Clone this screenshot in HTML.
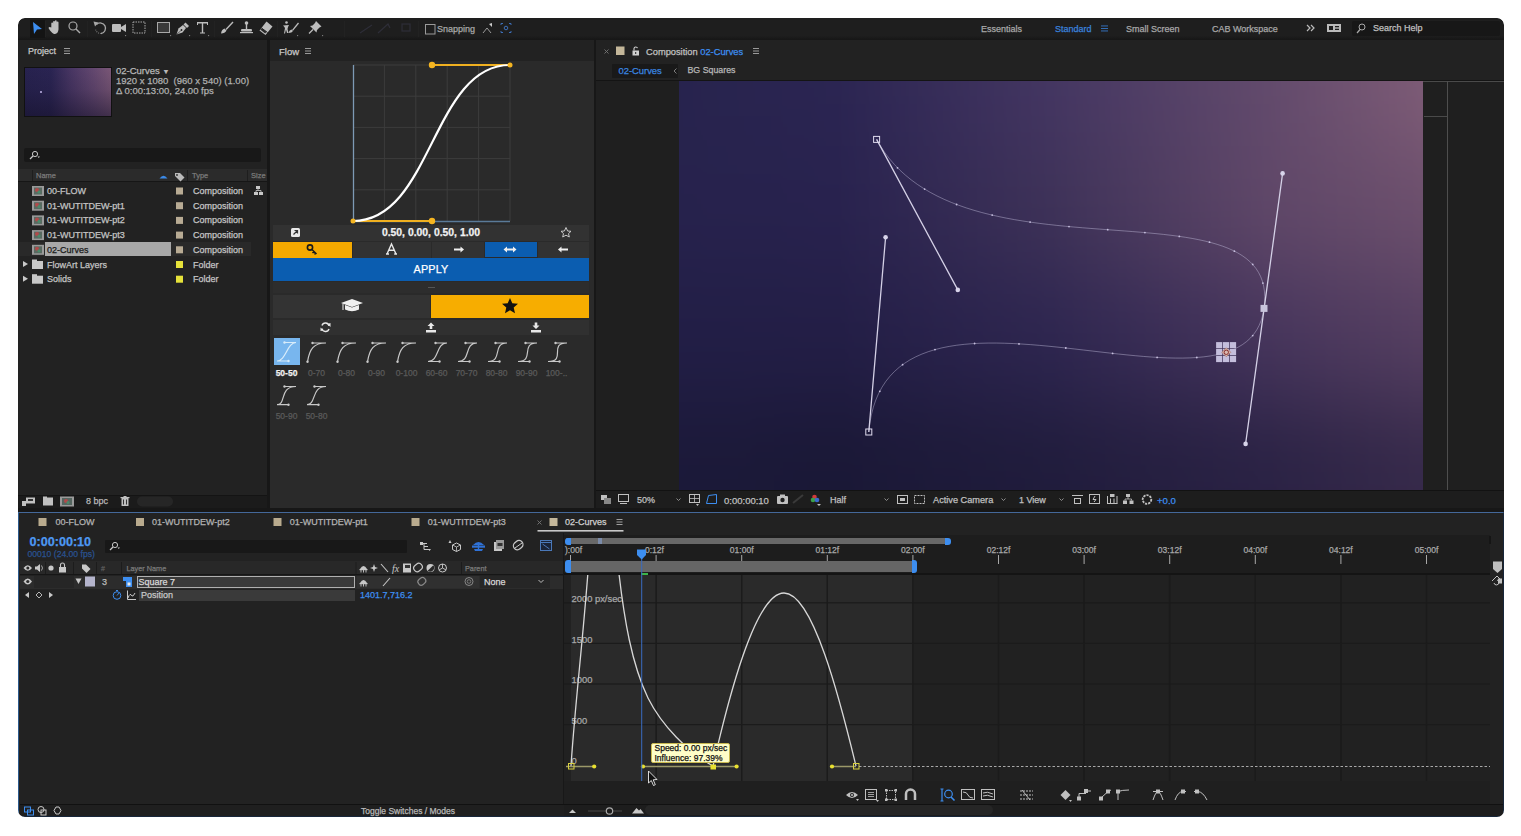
<!DOCTYPE html>
<html><head><meta charset="utf-8">
<style>
*{margin:0;padding:0;box-sizing:border-box}
html,body{width:1521px;height:836px;background:#fff;overflow:hidden;font-family:"Liberation Sans",sans-serif;color:#b0b0b0;font-size:9px}
.a{position:absolute}
.t{position:absolute;white-space:pre;line-height:1;-webkit-text-stroke:0.25px currentColor}
svg{position:absolute;overflow:visible}
</style></head><body>
<!-- WINDOW FRAME -->
<div class="a" style="left:18px;top:18px;width:1486px;height:799px;background:#171717;border-radius:7px"></div>

<!-- TOOLBAR -->
<div class="a" style="left:18px;top:18px;width:1486px;height:22px;background:linear-gradient(180deg,#1e1e1e 0%,#1e1e1e 80%,#161616 100%);border-radius:7px 7px 0 0"></div>
<!-- selection tool active bg -->
<div class="a" style="left:30px;top:20px;width:15px;height:18px;background:#141414"></div>
<svg style="left:0;top:0" width="1521" height="40">
 <g fill="#bdbdbd" stroke="none">
  <!-- arrow -->
  <path d="M33 22 L42 29 L37 29.5 L34 34 Z" fill="#3d8ef0"/>
  <!-- hand -->
  <path d="M51.3 27.5 V23.5 A0.9 0.9 0 0 1 53.1 23.5 V26.5 V21.8 A0.9 0.9 0 0 1 54.9 21.8 V26.5 V21.2 A0.9 0.9 0 0 1 56.7 21.2 V26.5 V22.5 A0.9 0.9 0 0 1 58.5 22.5 V29.5 Q58 33.5 55 34 L54 34 Q52 33 50 30.5 L48.5 28 Q49 26.5 51.3 27.5Z"/>
  <!-- rotate -->
  <path d="M96.5 24.5 A5.3 5.3 0 1 1 101 33.5" fill="none" stroke="#a8a8a8" stroke-width="1.3"/><path d="M101 33.5 A5.3 5.3 0 0 1 95.5 29" fill="none" stroke="#777" stroke-width="1.1" stroke-dasharray="1 1"/>
  <path d="M93.5 21.5 L98.5 22.5 L95 26.5Z" fill="#a8a8a8"/>
  <!-- camera -->
  <rect x="112" y="24" width="9" height="8" rx="1"/>
  <path d="M121 27 L126 24 L126 32 L121 29Z"/>
  <!-- pan behind -->
  <g fill="none" stroke="#a8a8a8" stroke-width="1" stroke-dasharray="1.5 1"><rect x="133" y="22" width="12" height="11"/></g>
  <!-- rect -->
  <rect x="157.5" y="22.5" width="12" height="10" fill="#3a3a3a" stroke="#a8a8a8" stroke-width="1"/>
  <!-- pen -->
  <path d="M176.5 34.5 L178.5 28.5 L183 25 L186 28 L182.5 32.5Z"/><path d="M183.5 24.5 L185.5 22.5 L189 26 L187 28Z"/><circle cx="181.5" cy="30" r="0.9" fill="#1e1e1e"/><path d="M176.8 34.2 L180.8 30.8" stroke="#1e1e1e" stroke-width="0.6"/>
  <!-- T -->
  <path d="M197 22 L208 22 L208 25 L207 25 L207 23.5 L203.2 23.5 L203.2 32.5 L205 32.5 L205 33.5 L200 33.5 L200 32.5 L201.8 32.5 L201.8 23.5 L198 23.5 L198 25 L197 25Z"/>
  <!-- brush -->
  <path d="M221 33.5 Q221.5 29.5 224.5 28.5 L226.5 30.5 Q225 33.5 221 33.5Z"/><path d="M225.5 29 L232.5 21.5 L233.5 22.5 L226.5 30Z"/>
  <!-- stamp -->
  <circle cx="246.5" cy="23" r="1.8"/><rect x="245.8" y="24" width="1.4" height="5"/><rect x="241" y="29" width="11" height="2.5" rx="1"/><rect x="240" y="32" width="13" height="1.2"/>
  <!-- eraser -->
  <path d="M259.5 30.5 L266.5 21.5 L272.5 26.5 L265.5 35Z"/><path d="M261.5 28 L267.5 32.5" stroke="#1e1e1e" stroke-width="1"/><path d="M260.2 29.6 L262 28.3 L266.5 31.8 L265.2 33.5Z" fill="#2a2a2a"/>
  <!-- roto -->
  <circle cx="286.5" cy="22.5" r="1.3"/><path d="M283 25.5 L289 25 L288 27 L287.5 29 L288.5 33 L287 33 L286 29.5 L285 33.5 L284 33.5 L285 28 L284 26.5Z"/><path d="M288.5 33 Q289 30 291.5 29.5 L293 31 Q292 33 288.5 33Z"/><path d="M292 30 L298 22.5 L299 23.5 L293 30.8Z"/>
  <!-- pin -->
  <path d="M316 21 L321.5 26.5 L319.5 27.5 L317 30 L316.5 32.5 L310 26 L312.5 25.5 L315 23Z"/><path d="M313 29.5 L309 33.5" stroke="#bdbdbd" stroke-width="1.3"/>
 </g>
 <!-- zoom -->
 <circle cx="73" cy="26" r="4" fill="none" stroke="#aaa" stroke-width="1.2"/><path d="M76 29 L80 33" stroke="#aaa" stroke-width="1.5"/>
 <!-- tiny corner triangles -->
 <g fill="#888"><path d="M125 35 l1.5 0 l-1.5 1.5z"/><path d="M170 35 l1.5 0 l-1.5 1.5z"/><path d="M189 35 l1.5 0 l-1.5 1.5z"/><path d="M208 35 l1.5 0 l-1.5 1.5z"/><path d="M297 35 l1.5 0 l-1.5 1.5z"/><path d="M322 35 l1.5 0 l-1.5 1.5z"/></g>
 <!-- separators -->
 <g fill="#222222"><rect x="45" y="21" width="1" height="16"/><rect x="87" y="21" width="1" height="16"/><rect x="151" y="21" width="1" height="16"/><rect x="214" y="21" width="1" height="16"/><rect x="277" y="21" width="1" height="16"/><rect x="344" y="21" width="1" height="16"/><rect x="418" y="21" width="1" height="16"/></g>
 <!-- faded icons -->
 <g stroke="#2e2e38" stroke-width="1.2" fill="none"><path d="M360 33 L372 25"/><path d="M378 33 L388 24 L390 28"/><rect x="402" y="24" width="8" height="7"/></g>
 <!-- snapping checkbox -->
 <rect x="425.5" y="24.5" width="9.5" height="9.5" fill="none" stroke="#9a9a9a" stroke-width="1"/>
 <path d="M483 33 L487 28 L491 33" fill="none" stroke="#9a9a9a" stroke-width="1"/><path d="M489 24 L492 23 L492 27Z" fill="#ccc"/>
 <g stroke="#3d6fb8" stroke-width="1" fill="none"><path d="M501 25 v-1.5 h2 M509 23.5 h2 v1.5 M511 31 v1.5 h-2 M503 32.5 h-2 v-1.5"/><circle cx="506" cy="28" r="1.8"/></g>
</svg>
<div class="t" style="left:437px;top:25px;color:#a8a8a8">Snapping</div>
<!-- right workspace -->
<div class="t" style="left:981px;top:24.5px;color:#a8a8a8">Essentials</div>
<div class="t" style="left:1055px;top:24.5px;color:#3a82dc">Standard</div>
<svg style="left:0;top:0" width="1521" height="40"><g fill="#3576c8"><rect x="1101" y="25.5" width="7" height="0.9"/><rect x="1101" y="28" width="7" height="0.9"/><rect x="1101" y="30.5" width="7" height="0.9"/></g>
<path d="M1307 25 L1310 28 L1307 31 M1311 25 L1314 28 L1311 31" fill="none" stroke="#bbb" stroke-width="1.2"/>
<rect x="1327" y="24" width="14" height="8" fill="#bbb"/><rect x="1329" y="26" width="4" height="4" fill="#1e1e1e"/><rect x="1335" y="26" width="4" height="1.3" fill="#1e1e1e"/><rect x="1335" y="28.7" width="4" height="1.3" fill="#1e1e1e"/>
<rect x="1352" y="21" width="148" height="15" rx="2" fill="#171717"/>
<circle cx="1362" cy="27" r="3" fill="none" stroke="#aaa" stroke-width="1"/><path d="M1360 29.5 L1357 33" stroke="#aaa" stroke-width="1.2"/>
</svg>
<div class="t" style="left:1126px;top:24.5px;color:#a8a8a8">Small Screen</div>
<div class="t" style="left:1212px;top:24.5px;color:#a8a8a8">CAB Workspace</div>
<div class="t" style="left:1373px;top:24px;color:#c0c0c0">Search Help</div>


<!-- PROJECT PANEL -->
<div class="a" style="left:18px;top:40px;width:249px;height:468px;background:#222222"></div>
<div class="t" style="left:28px;top:47px;color:#c8c8c8;font-size:9px">Project</div>
<svg style="left:0;top:0" width="300" height="520"><g fill="#9a9a9a"><rect x="64" y="48" width="6" height="1"/><rect x="64" y="50.5" width="6" height="1"/><rect x="64" y="53" width="6" height="1"/></g></svg>
<!-- thumbnail -->
<div class="a" style="left:23.5px;top:67px;width:88px;height:50px;border:1px solid #111;overflow:hidden;background:linear-gradient(90deg,#27224f 0%,#2a2452 30%,#4a3764 55%,#644870 80%,#7a5776 100%)"><div class="a" style="left:0;top:0;width:100%;height:100%;background:linear-gradient(180deg,rgba(20,16,40,0) 0%,rgba(20,16,40,0.15) 45%,rgba(20,16,40,0.55) 100%)"></div></div>
<div class="a" style="left:40px;top:91px;width:1.5px;height:1.5px;background:#9a8fc0"></div>
<div class="t" style="left:116px;top:66px;color:#b8b8b8;font-size:9.5px">02-Curves <span style="font-size:7px">▼</span></div>
<div class="t" style="left:116px;top:76px;color:#b0b0b0;font-size:9.5px">1920 x 1080  (960 x 540) (1.00)</div>
<div class="t" style="left:116px;top:86px;color:#b0b0b0;font-size:9.5px">Δ 0:00:13:00, 24.00 fps</div>
<!-- search -->
<div class="a" style="left:24px;top:148px;width:237px;height:14px;background:#181818;border-radius:2px"></div>
<svg style="left:0;top:0" width="300" height="520"><circle cx="35" cy="154" r="2.6" fill="none" stroke="#c8c8c8" stroke-width="1"/><path d="M33 156 L30 159" stroke="#c8c8c8" stroke-width="1.2"/><path d="M37.5 156.5 L40 156.5 L38.75 158Z" fill="#c8c8c8"/></svg>
<!-- header -->
<div class="a" style="left:18px;top:169px;width:249px;height:13px;background:#2b2b2b;border-bottom:1px solid #161616"></div>
<div class="a" style="left:32px;top:170px;width:1px;height:11px;background:#1e1e1e"></div>
<div class="t" style="left:36px;top:172px;color:#7a7a7a;font-size:7.5px">Name</div>
<svg style="left:0;top:0" width="300" height="520"><path d="M159.5 178.5 Q163.5 173 167.5 178.5Z" fill="#3b8ae8"/>
<path d="M175 173 L180 173 L184.5 177.5 L180.5 181.5 L175 176Z" fill="#bbb"/><circle cx="177" cy="175" r="0.9" fill="#2b2b2b"/>
<rect x="187" y="170" width="1" height="11" fill="#1e1e1e"/><rect x="247" y="170" width="1" height="11" fill="#1e1e1e"/>
</svg>
<div class="t" style="left:192px;top:172px;color:#7a7a7a;font-size:7.5px">Type</div>
<div class="t" style="left:251px;top:172px;color:#7a7a7a;font-size:7.5px">Size</div>
<!-- rows -->
<div class="a" style="left:45px;top:242px;width:126px;height:14px;background:#a8a8a8"></div>
<div class="a" style="left:18px;top:242px;width:27px;height:14px;background:#292929"></div>
<div class="a" style="left:171px;top:242px;width:80px;height:14px;background:#292929"></div>
<svg style="left:0;top:0" width="300" height="520">
 <g id="compicon">
  <rect x="32" y="186" width="12" height="10" fill="#9a9a9a"/><rect x="34" y="187.5" width="8" height="7" fill="#5a6a62"/><circle cx="37" cy="190" r="2" fill="#b04a4a"/><circle cx="39" cy="192" r="1.6" fill="#4a8a6a"/>
 </g>
 <use href="#compicon" y="14.7"/><use href="#compicon" y="29.4"/><use href="#compicon" y="44.1"/><use href="#compicon" y="58.8"/>
 <g fill="#b8ab94"><rect x="176" y="187.5" width="7" height="7"/><rect x="176" y="202.2" width="7" height="7"/><rect x="176" y="216.9" width="7" height="7"/><rect x="176" y="231.6" width="7" height="7"/><rect x="176" y="246.3" width="7" height="7"/></g>
 <g fill="#e6e23a"><rect x="176" y="261" width="7" height="7"/><rect x="176" y="275.7" width="7" height="7"/></g>
 <g fill="#c8c8c8"><rect x="32" y="261" width="11" height="8"/><rect x="32" y="259.5" width="5" height="2"/><rect x="32" y="275.7" width="11" height="8"/><rect x="32" y="274.2" width="5" height="2"/>
 <path d="M23 261 L28 264 L23 267Z"/><path d="M23 275.7 L28 278.7 L23 281.7Z"/></g>
 <!-- flowchart icon -->
 <g fill="#c8c8c8"><rect x="256" y="186" width="4" height="3"/><rect x="254" y="192" width="4" height="3"/><rect x="259" y="192" width="4" height="3"/><path d="M258 189 L258 190.5 L256 190.5 L256 192 M258 190.5 L261 190.5 L261 192" stroke="#c8c8c8" stroke-width="0.8" fill="none"/></g>
</svg>
<div class="t" style="left:47px;top:187px;color:#c4c4c4">00-FLOW</div>
<div class="t" style="left:47px;top:201.7px;color:#c4c4c4">01-WUTITDEW-pt1</div>
<div class="t" style="left:47px;top:216.4px;color:#c4c4c4">01-WUTITDEW-pt2</div>
<div class="t" style="left:47px;top:231.1px;color:#c4c4c4">01-WUTITDEW-pt3</div>
<div class="t" style="left:47px;top:245.8px;color:#1a1a1a">02-Curves</div>
<div class="t" style="left:47px;top:260.5px;color:#c4c4c4">FlowArt Layers</div>
<div class="t" style="left:47px;top:275.2px;color:#c4c4c4">Solids</div>
<div class="t" style="left:193px;top:187px;color:#c4c4c4">Composition</div>
<div class="t" style="left:193px;top:201.7px;color:#c4c4c4">Composition</div>
<div class="t" style="left:193px;top:216.4px;color:#c4c4c4">Composition</div>
<div class="t" style="left:193px;top:231.1px;color:#c4c4c4">Composition</div>
<div class="t" style="left:193px;top:245.8px;color:#c4c4c4">Composition</div>
<div class="t" style="left:193px;top:260.5px;color:#c4c4c4">Folder</div>
<div class="t" style="left:193px;top:275.2px;color:#c4c4c4">Folder</div>
<!-- bottom bar -->
<div class="a" style="left:18px;top:495px;width:249px;height:13px;background:#1b1b1b;border-top:1px solid #141414"></div>
<svg style="left:0;top:0" width="300" height="520">
 <g fill="#c0c0c0"><rect x="26" y="497.5" width="9" height="6"/><rect x="22" y="501" width="4" height="5"/><rect x="28" y="499" width="5" height="2" fill="#333"/>
 <rect x="43" y="497.5" width="10" height="8"/><rect x="43" y="496.5" width="4" height="1.5"/>
 <rect x="60" y="496.5" width="14" height="10" fill="#9a9a9a"/><rect x="62" y="498" width="10" height="7" fill="#556660"/><circle cx="66" cy="501" r="2" fill="#b04a4a"/><circle cx="68" cy="502.5" r="1.5" fill="#4a8a6a"/>
 <rect x="121.5" y="498" width="7" height="8" rx="0.5"/><rect x="120.5" y="497" width="9" height="1.2"/><rect x="123.5" y="496" width="3" height="1.2"/><rect x="123" y="499.5" width="1" height="5" fill="#333"/><rect x="126" y="499.5" width="1" height="5" fill="#333"/></g>
 <rect x="137" y="496.5" width="36" height="10" rx="5" fill="#262626"/>
</svg>
<div class="t" style="left:86px;top:497px;color:#b8b8b8">8 bpc</div>


<!-- FLOW PANEL -->
<div class="a" style="left:270px;top:40px;width:324px;height:468px;background:#222222"></div>
<div class="a" style="left:270px;top:61px;width:324px;height:447px;background:#2a2a2a"></div>
<!--FLOW-->
<div class="t" style="left:279px;top:47px;color:#c8c8c8;font-size:9.5px">Flow</div>
<svg style="left:0;top:0" width="600" height="520">
<g fill="#9a9a9a"><rect x="305" y="48" width="6" height="1"/><rect x="305" y="50.5" width="6" height="1"/><rect x="305" y="53" width="6" height="1"/></g>
<g stroke="#3c3c3c" stroke-width="1" fill="none"><path d="M384.4 65 V221" /><path d="M353 96.2 H510" /><path d="M415.8 65 V221" /><path d="M353 127.4 H510" /><path d="M447.2 65 V221" /><path d="M353 158.6 H510" /><path d="M478.6 65 V221" /><path d="M353 189.8 H510" /><path d="M510 65 V221" /><path d="M353 65 H510" /></g>
<path d="M353.5 65 V221" stroke="#7d9ab5" stroke-width="1.3"/>
<path d="M353 221.5 H510" stroke="#5a7a98" stroke-width="1.3"/>
<path d="M353 221 H432" stroke="#f0b020" stroke-width="2"/>
<path d="M432 65 H510" stroke="#f0b020" stroke-width="2"/>
<path d="M353 221 C432 221 432 65 510 65" stroke="#ffffff" stroke-width="2.2" fill="none"/>
<circle cx="432" cy="65" r="3.2" fill="#f5b521"/><circle cx="510" cy="65" r="2.5" fill="#f5b521"/>
<circle cx="432" cy="221" r="3.2" fill="#f5b521"/><circle cx="353" cy="221" r="2.5" fill="#f5b521"/>
</svg>
<div class="a" style="left:273px;top:225px;width:316px;height:16px;background:#323232"></div>
<div class="t" style="left:273px;top:228px;width:316px;text-align:center;color:#f0f0f0;font-weight:bold;font-size:10.4px">0.50, 0.00, 0.50, 1.00</div>
<svg style="left:0;top:0" width="600" height="520"><rect x="291" y="228" width="9" height="9" rx="1.5" fill="#e8e8e8"/><path d="M293.5 234.5 L297.5 230.5 M294.5 230.5 H297.5 V233.5" stroke="#323232" stroke-width="1.2" fill="none"/>
<path d="M566 227.5 L567.6 231 L571 231.3 L568.5 233.6 L569.3 237 L566 235.2 L562.7 237 L563.5 233.6 L561 231.3 L564.4 231Z" fill="none" stroke="#d8d8d8" stroke-width="0.9"/></svg>
<div class="a" style="left:273px;top:242px;width:79px;height:16px;background:#f5a900"></div>
<div class="a" style="left:353px;top:242px;width:78px;height:16px;background:#323232"></div>
<div class="a" style="left:432px;top:242px;width:52px;height:16px;background:#323232"></div>
<div class="a" style="left:485px;top:242px;width:52px;height:15px;background:#0b5db0"></div>
<div class="a" style="left:538px;top:242px;width:51px;height:16px;background:#323232"></div>
<svg style="left:0;top:0" width="600" height="520">
<circle cx="310" cy="247.5" r="2.6" fill="none" stroke="#1a1a1a" stroke-width="1.6"/><path d="M312 249.5 L316.5 254 M314 251.5 L312.5 253 M315.5 253 L314.3 254.2" stroke="#1a1a1a" stroke-width="1.5"/>
<path d="M387 254 L391.5 244 L396 254 M388.8 250.3 H394.2 M386 254 H389 M394.2 254 H397" stroke="#e8e8e8" stroke-width="1.4" fill="none"/>
<path d="M454 249.5 H462" stroke="#f0f0f0" stroke-width="2"/><path d="M460.5 246.5 L464 249.5 L460.5 252.5Z" fill="#f0f0f0"/>
<path d="M505 249.5 H515" stroke="#f0f0f0" stroke-width="2"/><path d="M507 246.5 L503.5 249.5 L507 252.5Z M513 246.5 L516.5 249.5 L513 252.5Z" fill="#f0f0f0"/>
<path d="M560 249.5 H568" stroke="#f0f0f0" stroke-width="2"/><path d="M561.5 246.5 L558 249.5 L561.5 252.5Z" fill="#f0f0f0"/>
</svg>
<div class="a" style="left:273px;top:258px;width:316px;height:23px;background:#0b5db0"></div>
<div class="t" style="left:273px;top:264px;width:316px;text-align:center;color:#ffffff;font-size:10.8px;letter-spacing:0.2px">APPLY</div>
<div class="a" style="left:273px;top:282px;width:316px;height:11px;background:#2d2d2d"></div>
<div class="a" style="left:428px;top:286.5px;width:7px;height:1px;background:#555"></div>
<div class="a" style="left:273px;top:295px;width:157px;height:23px;background:#333333"></div>
<div class="a" style="left:431px;top:295px;width:158px;height:23px;background:#f7ad00"></div>
<svg style="left:0;top:0" width="600" height="520">
<path d="M341 303 L352 299 L363 303 L352 307Z" fill="#f0f0f0"/><path d="M345 305 V309.5 Q352 313 359 309.5 V305 L352 307.5Z" fill="#f0f0f0"/><path d="M343 303.5 V310" stroke="#f0f0f0" stroke-width="1"/>
<path d="M510 298 L512.3 303.3 L518 303.8 L513.7 307.6 L515 313.2 L510 310.2 L505 313.2 L506.3 307.6 L502 303.8 L507.7 303.3Z" fill="#111"/>
</svg>
<div class="a" style="left:273px;top:320px;width:316px;height:15px;background:#303030"></div>
<svg style="left:0;top:0" width="600" height="520">
<path d="M322 325.5 A3.6 3.6 0 0 1 329 326" fill="none" stroke="#e8e8e8" stroke-width="1.4"/><path d="M329 329 A3.6 3.6 0 0 1 322 328.5" fill="none" stroke="#e8e8e8" stroke-width="1.4"/><path d="M327.5 324 L330.5 327 L330.5 323Z M323.5 330.5 L320.5 327.5 L320.5 331Z" fill="#e8e8e8"/>
<path d="M431 322.5 L434.5 326 H432.3 V329 H429.7 V326 H427.5Z" fill="#e8e8e8"/><rect x="426" y="330" width="10" height="2.5" fill="#e8e8e8"/>
<path d="M536 329 L539.5 325.5 H537.3 V322.5 H534.7 V325.5 H532.5Z" fill="#e8e8e8"/><rect x="531" y="330" width="10" height="2.5" fill="#e8e8e8"/>
</svg>
<div class="a" style="left:273.5px;top:338px;width:26.5px;height:27px;background:#78b6ee"></div>
<svg style="left:0;top:0" width="600" height="520"><path d="M277.0 361 H288.5 M284.5 342.5 H296.0 M277.0 361 C286.0 361 287.0 342.5 296.0 342.5" stroke="#d8ecfa" stroke-width="1.2" fill="none"/><circle cx="288.5" cy="361" r="1.2" fill="#d8ecfa"/><circle cx="284.5" cy="342.5" r="1.2" fill="#d8ecfa"/><path d="M307.5 361.8 C309.5 349 313.5 343 326.0 343 M312.5 343 H326.0" stroke="#c8c8c8" stroke-width="1.2" fill="none"/><circle cx="307.5" cy="361.8" r="1.2" fill="#c8c8c8"/><circle cx="312.5" cy="343" r="1.2" fill="#c8c8c8"/><path d="M337.5 361.8 C339.5 349 343.5 343 356.0 343 M342.5 343 H356.0" stroke="#c8c8c8" stroke-width="1.2" fill="none"/><circle cx="337.5" cy="361.8" r="1.2" fill="#c8c8c8"/><circle cx="342.5" cy="343" r="1.2" fill="#c8c8c8"/><path d="M367.5 361.8 C369.5 349 373.5 343 386.0 343 M372.5 343 H386.0" stroke="#c8c8c8" stroke-width="1.2" fill="none"/><circle cx="367.5" cy="361.8" r="1.2" fill="#c8c8c8"/><circle cx="372.5" cy="343" r="1.2" fill="#c8c8c8"/><path d="M397.5 361.8 C399.5 349 403.5 343 416.0 343 M402.5 343 H416.0" stroke="#c8c8c8" stroke-width="1.2" fill="none"/><circle cx="397.5" cy="361.8" r="1.2" fill="#c8c8c8"/><circle cx="402.5" cy="343" r="1.2" fill="#c8c8c8"/><path d="M428.0 361.5 H439.5 M435.5 343 H447.0 M428.0 361.5 C439.4 361.5 435.6 343 447.0 343" stroke="#c8c8c8" stroke-width="1.2" fill="none"/><circle cx="439.5" cy="361.5" r="1.2" fill="#c8c8c8"/><circle cx="435.5" cy="343" r="1.2" fill="#c8c8c8"/><path d="M458.0 361.5 H469.5 M465.5 343 H477.0 M458.0 361.5 C471.3 361.5 463.7 343 477.0 343" stroke="#c8c8c8" stroke-width="1.2" fill="none"/><circle cx="469.5" cy="361.5" r="1.2" fill="#c8c8c8"/><circle cx="465.5" cy="343" r="1.2" fill="#c8c8c8"/><path d="M488.0 361.5 H499.5 M495.5 343 H507.0 M488.0 361.5 C503.2 361.5 491.8 343 507.0 343" stroke="#c8c8c8" stroke-width="1.2" fill="none"/><circle cx="499.5" cy="361.5" r="1.2" fill="#c8c8c8"/><circle cx="495.5" cy="343" r="1.2" fill="#c8c8c8"/><path d="M518.0 361.5 H529.5 M525.5 343 H537.0 M518.0 361.5 C535.1 361.5 519.9 343 537.0 343" stroke="#c8c8c8" stroke-width="1.2" fill="none"/><circle cx="529.5" cy="361.5" r="1.2" fill="#c8c8c8"/><circle cx="525.5" cy="343" r="1.2" fill="#c8c8c8"/><path d="M548.0 361.5 H559.5 M555.5 343 H567.0 M548.0 361.5 C567.0 361.5 548.0 343 567.0 343" stroke="#c8c8c8" stroke-width="1.2" fill="none"/><circle cx="559.5" cy="361.5" r="1.2" fill="#c8c8c8"/><circle cx="555.5" cy="343" r="1.2" fill="#c8c8c8"/><path d="M277.0 404.7 H288.5 M284.5 386.5 H296.0 M277.0 404.7 C286.5 404.7 279.0 386.5 296.0 386.5" stroke="#c8c8c8" stroke-width="1.2" fill="none"/><circle cx="288.5" cy="404.7" r="1.2" fill="#c8c8c8"/><circle cx="284.5" cy="386.5" r="1.2" fill="#c8c8c8"/><path d="M307.0 404.7 H318.5 M314.5 386.5 H326.0 M307.0 404.7 C316.5 404.7 311.0 386.5 326.0 386.5" stroke="#c8c8c8" stroke-width="1.2" fill="none"/><circle cx="318.5" cy="404.7" r="1.2" fill="#c8c8c8"/><circle cx="314.5" cy="386.5" r="1.2" fill="#c8c8c8"/></svg>
<div class="t" style="left:273px;top:369px;width:27px;text-align:center;color:#f0f0f0;font-weight:bold;font-size:8.5px">50-50</div>
<div class="t" style="left:301.5px;top:369px;width:30px;text-align:center;color:#5a5a5a;font-size:8.5px">0-70</div>
<div class="t" style="left:331.5px;top:369px;width:30px;text-align:center;color:#5a5a5a;font-size:8.5px">0-80</div>
<div class="t" style="left:361.5px;top:369px;width:30px;text-align:center;color:#5a5a5a;font-size:8.5px">0-90</div>
<div class="t" style="left:391.5px;top:369px;width:30px;text-align:center;color:#5a5a5a;font-size:8.5px">0-100</div>
<div class="t" style="left:421.5px;top:369px;width:30px;text-align:center;color:#5a5a5a;font-size:8.5px">60-60</div>
<div class="t" style="left:451.5px;top:369px;width:30px;text-align:center;color:#5a5a5a;font-size:8.5px">70-70</div>
<div class="t" style="left:481.5px;top:369px;width:30px;text-align:center;color:#5a5a5a;font-size:8.5px">80-80</div>
<div class="t" style="left:511.5px;top:369px;width:30px;text-align:center;color:#5a5a5a;font-size:8.5px">90-90</div>
<div class="t" style="left:541.5px;top:369px;width:30px;text-align:center;color:#5a5a5a;font-size:8.5px">100-..</div>
<div class="t" style="left:271.5px;top:412px;width:30px;text-align:center;color:#5a5a5a;font-size:8.5px">50-90</div>
<div class="t" style="left:301.5px;top:412px;width:30px;text-align:center;color:#5a5a5a;font-size:8.5px">50-80</div>
<!--/FLOW-->

<!-- COMP PANEL -->
<div class="a" style="left:596px;top:40px;width:908px;height:468px;background:#222222"></div>
<!--COMP-->
<svg style="left:0;top:0" width="1521" height="520">
<path d="M604.5 49.5 L608.5 53.5 M608.5 49.5 L604.5 53.5" stroke="#777" stroke-width="0.9"/>
<rect x="616" y="46.5" width="8.5" height="8.5" fill="#c4b79a"/>
<rect x="632.5" y="50.5" width="6.5" height="5" fill="#d0d0d0"/><path d="M634 50.5 V48.5 A1.8 1.8 0 0 1 637.5 48.2" stroke="#d0d0d0" stroke-width="1.1" fill="none"/><rect x="635.2" y="52" width="1" height="2" fill="#222"/>
<g fill="#9a9a9a"><rect x="753" y="48" width="6" height="1"/><rect x="753" y="50.5" width="6" height="1"/><rect x="753" y="53" width="6" height="1"/></g>
</svg>
<div class="t" style="left:646px;top:48px;color:#c0c0c0;font-size:9.3px">Composition <span style="color:#3d8ef0">02-Curves</span></div>
<div class="a" style="left:612px;top:64px;width:66px;height:14px;background:#191919;border-radius:1px"></div>
<div class="t" style="left:618.5px;top:65.5px;color:#3a86e0;font-size:9.4px">02-Curves</div>
<svg style="left:0;top:0" width="1521" height="520"><path d="M676.5 68.5 L674 71 L676.5 73.5" stroke="#888" stroke-width="0.9" fill="none"/></svg>
<div class="t" style="left:687.5px;top:65.5px;color:#b8b8b8;font-size:8.8px">BG Squares</div>
<div class="a" style="left:596px;top:80px;width:908px;height:410px;background:#1f1f1f;border-top:1px solid #141414"></div>
<svg style="left:679px;top:81px" width="744" height="409" viewBox="0 0 744 409"><defs><linearGradient id="cg0" x1="0" y1="0" x2="1" y2="0"><stop offset="0%" stop-color="#26234c"/><stop offset="25%" stop-color="#2b2552"/><stop offset="50%" stop-color="#443662"/><stop offset="75%" stop-color="#624a6c"/><stop offset="100%" stop-color="#88627a"/></linearGradient><linearGradient id="cg1" x1="0" y1="0" x2="1" y2="0"><stop offset="0%" stop-color="#26224c"/><stop offset="25%" stop-color="#28224e"/><stop offset="50%" stop-color="#3e3258"/><stop offset="75%" stop-color="#5f4768"/><stop offset="100%" stop-color="#70526e"/></linearGradient><linearGradient id="cg2" x1="0" y1="0" x2="1" y2="0"><stop offset="0%" stop-color="#221e46"/><stop offset="25%" stop-color="#231e46"/><stop offset="50%" stop-color="#2e2650"/><stop offset="75%" stop-color="#46355c"/><stop offset="100%" stop-color="#5a4262"/></linearGradient><linearGradient id="cg3" x1="0" y1="0" x2="1" y2="0"><stop offset="0%" stop-color="#1c1a3a"/><stop offset="25%" stop-color="#1a1836"/><stop offset="50%" stop-color="#201c3c"/><stop offset="75%" stop-color="#2a2244"/><stop offset="100%" stop-color="#3a2c4c"/></linearGradient><filter id="cblur" color-interpolation-filters="sRGB" filterUnits="userSpaceOnUse" x="-100" y="-200" width="944" height="809"><feGaussianBlur stdDeviation="2 45"/></filter><clipPath id="cclip"><rect x="0" y="0" width="744" height="409"/></clipPath></defs><g clip-path="url(#cclip)"><g filter="url(#cblur)"><rect x="-60" y="-150" width="864" height="215" fill="url(#cg0)"/><rect x="-60" y="65" width="864" height="127" fill="url(#cg1)"/><rect x="-60" y="192" width="864" height="129" fill="url(#cg2)"/><rect x="-60" y="321" width="864" height="239" fill="url(#cg3)"/></g></g></svg>
<div class="a" style="left:1423px;top:81px;width:81px;height:1px;background:#4a4a4a"></div>
<div class="a" style="left:1446.5px;top:81px;width:1px;height:409px;background:#4e4e4e"></div>
<div class="a" style="left:1424px;top:115.5px;width:23px;height:1px;background:#4a4a4a"></div>
<svg style="left:0;top:0" width="1521" height="520">
<path d="M876.6 139.4 C957.8 289.9 1282.6 173.4 1264 308.4 C1245.6 443.9 885.6 237.3 868.8 432" stroke="rgba(200,195,225,0.55)" stroke-width="0.8" fill="none"/>
<path d="M876.6 139.4 L957.8 289.9 M1282.6 173.4 L1245.6 443.9 M868.8 432 L885.6 237.3" stroke="#d4d0e6" stroke-width="1.3" fill="none"/>
<g fill="#c8c0e0"><circle cx="897.5" cy="167.8" r="0.9"/><circle cx="924.6" cy="189.1" r="0.9"/><circle cx="956.6" cy="204.5" r="0.9"/><circle cx="992.2" cy="215.1" r="0.9"/><circle cx="1030.1" cy="222.1" r="0.9"/><circle cx="1069.0" cy="226.6" r="0.9"/><circle cx="1107.7" cy="229.7" r="0.9"/><circle cx="1144.9" cy="232.6" r="0.9"/><circle cx="1179.3" cy="236.4" r="0.9"/><circle cx="1209.5" cy="242.2" r="0.9"/><circle cx="1234.4" cy="251.2" r="0.9"/><circle cx="1252.7" cy="264.4" r="0.9"/><circle cx="1262.9" cy="283.1" r="0.9"/><circle cx="1252.7" cy="335.6" r="0.9"/><circle cx="1229.5" cy="351.1" r="0.9"/><circle cx="1196.8" cy="357.5" r="0.9"/><circle cx="1157.1" cy="357.4" r="0.9"/><circle cx="1112.6" cy="353.4" r="0.9"/><circle cx="1065.8" cy="348.0" r="0.9"/><circle cx="1019.0" cy="343.9" r="0.9"/><circle cx="974.6" cy="343.5" r="0.9"/><circle cx="935.0" cy="349.6" r="0.9"/><circle cx="902.6" cy="364.7" r="0.9"/><circle cx="879.8" cy="391.3" r="0.9"/></g>
<circle cx="957.8" cy="289.9" r="2.3" fill="#d8d4ea"/><circle cx="1282.6" cy="173.4" r="2.3" fill="#d8d4ea"/><circle cx="1245.6" cy="443.9" r="2.3" fill="#d8d4ea"/><circle cx="885.6" cy="237.3" r="2.3" fill="#d8d4ea"/>
<rect x="873.6" y="136.4" width="6" height="6" fill="none" stroke="#e0dcef" stroke-width="1"/>
<rect x="865.8" y="429" width="6" height="6" fill="none" stroke="#e0dcef" stroke-width="1"/>
<rect x="1260.5" y="304.9" width="7" height="7" fill="#c8c4dc"/>
<rect x="1216.1" y="342.1" width="6.2" height="6.2" fill="#c4bedc"/><rect x="1216.1" y="349.0" width="6.2" height="6.2" fill="#c4bedc"/><rect x="1216.1" y="355.9" width="6.2" height="6.2" fill="#c4bedc"/><rect x="1223.0" y="342.1" width="6.2" height="6.2" fill="#c4bedc"/><rect x="1223.0" y="349.0" width="6.2" height="6.2" fill="#c4bedc"/><rect x="1223.0" y="355.9" width="6.2" height="6.2" fill="#c4bedc"/><rect x="1229.9" y="342.1" width="6.2" height="6.2" fill="#c4bedc"/><rect x="1229.9" y="349.0" width="6.2" height="6.2" fill="#c4bedc"/><rect x="1229.9" y="355.9" width="6.2" height="6.2" fill="#c4bedc"/><path d="M1226.3 347.8 L1230.8 352.3 L1226.3 356.8 L1221.8 352.3Z" fill="#d8b8b0" stroke="#a87060" stroke-width="0.6"/><circle cx="1226.3" cy="352.3" r="2.2" fill="none" stroke="#8a3030" stroke-width="1"/>
</svg>
<div class="a" style="left:596px;top:490px;width:908px;height:18px;background:#1d1d1d;border-top:1px solid #121212"></div>
<svg style="left:0;top:0" width="1521" height="520">
<g fill="#c0c0c0">
<rect x="601" y="495" width="6" height="5"/><rect x="604" y="498" width="7" height="6" fill="#888"/>
<rect x="618.5" y="494.5" width="10" height="7" fill="none" stroke="#c0c0c0" stroke-width="1"/><rect x="620" y="503" width="7" height="1"/>
<path d="M676.5 498.5 L678.5 500.5 L680.5 498.5" stroke="#999" stroke-width="0.9" fill="none"/>
<rect x="689.5" y="494.5" width="10" height="8" fill="none" stroke="#c0c0c0" stroke-width="1"/><path d="M694.5 494 V503 M689 498.5 H700" stroke="#c0c0c0" stroke-width="0.8"/><path d="M696 504 L699 504 L697.5 506Z"/>
<path d="M706.5 503.5 L708.5 495.5 L716.5 494.5 L716.5 503.5Z" fill="none" stroke="#3d8ef0" stroke-width="1"/>
<rect x="777" y="496" width="11" height="8" rx="1"/><rect x="780" y="494.5" width="5" height="2"/><circle cx="782.5" cy="500" r="2.2" fill="#1d1d1d"/>
<path d="M793 503 L803 495" stroke="#3a3a3a" stroke-width="2"/>
<circle cx="814.5" cy="497" r="2.3" fill="#d03a3a"/><circle cx="813" cy="500" r="2.3" fill="#3aa04a"/><circle cx="817" cy="500" r="2.3" fill="#3a6ad0"/><path d="M817 504 L821 504 L819 506Z"/>
<path d="M884.5 498.5 L886.5 500.5 L888.5 498.5" stroke="#999" stroke-width="0.9" fill="none"/>
<rect x="897.5" y="495.5" width="10" height="8" fill="none" stroke="#c0c0c0" stroke-width="1"/><rect x="900" y="498" width="5" height="3"/>
<rect x="914.5" y="495.5" width="10" height="8" fill="none" stroke="#c0c0c0" stroke-width="1" stroke-dasharray="2 1"/>
<path d="M1001.5 498.5 L1003.5 500.5 L1005.5 498.5" stroke="#999" stroke-width="0.9" fill="none"/>
<path d="M1059.5 498.5 L1061.5 500.5 L1063.5 498.5" stroke="#999" stroke-width="0.9" fill="none"/>
<rect x="1074.5" y="498.5" width="6" height="5" fill="none" stroke="#c0c0c0" stroke-width="1"/><path d="M1072 495.5 H1083" stroke="#c0c0c0" stroke-width="1"/>
<rect x="1089.5" y="494.5" width="10" height="9" fill="none" stroke="#c0c0c0" stroke-width="1"/><path d="M1095 496 L1093 499.5 L1096 499.5 L1094 502" stroke="#c0c0c0" stroke-width="1" fill="none"/>
<path d="M1107.5 503.5 V496 M1117 503.5 V496 M1107 503.5 H1117.5 M1110.5 503 V498.5 M1114 503 V498.5" stroke="#c0c0c0" stroke-width="1" fill="none"/><rect x="1110" y="494" width="4.5" height="3"/>
<rect x="1126" y="494" width="4" height="3"/><rect x="1123" y="500.5" width="4" height="3.5"/><rect x="1129.5" y="500.5" width="4" height="3.5"/><path d="M1128 497 V499 M1125 500.5 V499 H1131.5 V500.5" stroke="#c0c0c0" stroke-width="0.8" fill="none"/>
<circle cx="1147" cy="499.5" r="4.3" fill="none" stroke="#c0c0c0" stroke-width="1.8" stroke-dasharray="2.2 1"/>
</g></svg>
<div class="t" style="left:637px;top:495.5px;color:#c0c0c0">50%</div>
<div class="t" style="left:724px;top:495.5px;color:#c0c0c0;font-size:9.5px">0:00:00:10</div>
<div class="t" style="left:830px;top:495.5px;color:#c0c0c0">Half</div>
<div class="t" style="left:933px;top:495.5px;color:#c0c0c0;font-size:9.2px">Active Camera</div>
<div class="t" style="left:1019px;top:495.5px;color:#c0c0c0">1 View</div>
<div class="t" style="left:1157px;top:495.5px;color:#3d8ef0;font-size:9.6px">+0.0</div>
<!--/COMP-->

<!-- TIMELINE -->
<div class="a" style="left:18px;top:511.5px;width:1486px;height:305.5px;background:#222222;border-top:1.6px solid #44689a;border-left:1.5px solid #2c5a8c;border-right:1px solid #17263a;border-bottom:1px solid #17263a"></div>
<!--TIMELINE-->
<svg style="left:0;top:0" width="1521" height="836"><rect x="38.5" y="518" width="8" height="8" fill="#b9ab8e"/><rect x="136" y="518" width="8" height="8" fill="#b9ab8e"/><rect x="273.5" y="518" width="8" height="8" fill="#b9ab8e"/><rect x="411.5" y="518" width="8" height="8" fill="#b9ab8e"/><path d="M537.5 520.5 L541.5 524.5 M541.5 520.5 L537.5 524.5" stroke="#777" stroke-width="0.9"/><rect x="549.5" y="518" width="8" height="8" fill="#c4b79a"/><g fill="#a0a0a0"><rect x="616.5" y="519" width="6" height="1"/><rect x="616.5" y="521.5" width="6" height="1"/><rect x="616.5" y="524" width="6" height="1"/></g><rect x="537.5" y="530" width="86" height="1.6" fill="#c8c8c8"/></svg>
<div class="t" style="left:55.5px;top:517.5px;color:#b4b4b4">00-FLOW</div>
<div class="t" style="left:152px;top:517.5px;color:#b4b4b4">01-WUTITDEW-pt2</div>
<div class="t" style="left:289.8px;top:517.5px;color:#b4b4b4">01-WUTITDEW-pt1</div>
<div class="t" style="left:427.8px;top:517.5px;color:#b4b4b4">01-WUTITDEW-pt3</div>
<div class="t" style="left:565px;top:517.5px;color:#d0d0d0">02-Curves</div>
<div class="t" style="left:29.5px;top:536px;color:#4d98f2;font-weight:bold;font-size:12.6px">0:00:00:10</div>
<div class="t" style="left:27.5px;top:549.5px;color:#2a5290;font-size:8.6px">00010 (24.00 fps)</div>
<div class="a" style="left:105px;top:539.5px;width:302px;height:13px;background:#181818;border-radius:1px"></div>
<svg style="left:0;top:0" width="1521" height="836"><circle cx="115" cy="545" r="2.6" fill="none" stroke="#c8c8c8" stroke-width="1"/><path d="M113 547 L110 550" stroke="#c8c8c8" stroke-width="1.2"/><path d="M117.5 547.5 L120 547.5 L118.75 549Z" fill="#c8c8c8"/>
<g fill="#c8c8c8">
<path d="M421 543.5 H427 M424 543.5 V549.5 H429 M424 546.5 H428" stroke="#c8c8c8" stroke-width="1" fill="none"/><rect x="420" y="542" width="3" height="3"/><path d="M428 549 L431 549 L429.5 551Z"/>
<path d="M450 540 L451.5 543 L448.5 543Z"/><path d="M452.5 545 L456.5 543 L460.5 545 V549.5 L456.5 551.5 L452.5 549.5Z" fill="none" stroke="#c8c8c8" stroke-width="1"/><path d="M452.5 545 L456.5 547 L460.5 545 M456.5 547 V551.5" stroke="#c8c8c8" stroke-width="0.8" fill="none"/>
</g>
<g fill="#2f72d8"><path d="M473 545 Q478.5 539 484 545Z"/><rect x="472" y="545.5" width="13" height="2.2"/><rect x="477.8" y="543" width="1.4" height="8"/><path d="M474 549 H483 L482 551 H475Z"/></g>
<g fill="#c8c8c8"><rect x="494" y="542" width="8" height="9"/><rect x="496" y="540" width="8" height="9" fill="#999"/><rect x="497.5" y="543" width="5" height="3" fill="#333"/></g>
<g><rect x="513.5" y="541" width="10" height="8" rx="4" fill="none" stroke="#c8c8c8" stroke-width="1.3" transform="rotate(-40 518.5 545.5)"/><path d="M515 548 L522 543" stroke="#c8c8c8" stroke-width="1"/></g>
<rect x="540.5" y="540.5" width="11" height="10" fill="#1a2438" stroke="#4a78b8" stroke-width="1"/><path d="M540.5 542.5 H551.5 M542.5 544 L549.5 549" stroke="#4a78b8" stroke-width="1"/>
</svg>
<div class="a" style="left:19.5px;top:561px;width:544px;height:14px;background:#282828;border-bottom:1px solid #161616"></div>
<svg style="left:0;top:0" width="1521" height="836"><g fill="#c8c8c8">
<path d="M23.5 568 Q27.8 562.5 32 568 Q27.8 573.5 23.5 568Z"/><circle cx="27.8" cy="568" r="1.5" fill="#282828"/>
<path d="M35 566.5 H37 L40 564 V572 L37 569.5 H35Z"/><path d="M41.5 565.5 Q43.5 568 41.5 570.5" stroke="#c8c8c8" stroke-width="0.8" fill="none"/>
<circle cx="51" cy="568" r="2.6"/>
<rect x="59" y="567" width="7" height="5.5"/><path d="M60.5 567 V565 A2 2 0 0 1 64.5 565 V567" stroke="#c8c8c8" stroke-width="1.1" fill="none"/>
<path d="M82 564.5 L86 564.5 L90.5 569 L86.5 573 L82 568.5Z"/>
</g><g fill="#1c1c1c"><rect x="45" y="562" width="1" height="12"/><rect x="73" y="562" width="1" height="12"/><rect x="96" y="562" width="1" height="12"/><rect x="121" y="562" width="1" height="12"/><rect x="355.5" y="562" width="1" height="12"/><rect x="461" y="562" width="1" height="12"/></g>
<g fill="#c8c8c8" stroke="none">
<path d="M360 569 Q363.5 563 367 569Z"/><rect x="359.5" y="569" width="8" height="1.2"/><path d="M361 570 V572.5 M363.5 570 V572.5 M366 570 V572.5" stroke="#c8c8c8" stroke-width="0.9"/>
<path d="M374 564 L375 567 L378 568 L375 569 L374 572 L373 569 L370 568 L373 567Z"/>
<path d="M381 564 L388 572" stroke="#c8c8c8" stroke-width="1.1"/>
</g>
<text x="392" y="572" font-family="Liberation Serif" font-style="italic" font-size="10" fill="#c8c8c8">fx</text>
<g fill="#c8c8c8"><rect x="403" y="563.5" width="8" height="9"/><rect x="405" y="565" width="5" height="3" fill="#333"/>
<rect x="413.5" y="564" width="9" height="7" rx="3.5" fill="none" stroke="#c8c8c8" stroke-width="1.2" transform="rotate(-40 418 567.5)"/>
<circle cx="430.5" cy="568" r="4"/><path d="M427.7 570.8 L433.3 565.2 A4 4 0 0 1 427.7 570.8Z" fill="#282828"/>
<circle cx="442.5" cy="568" r="4" fill="none" stroke="#c8c8c8" stroke-width="1"/><path d="M442.5 564 V568 L439 570 M442.5 568 L446 570" stroke="#c8c8c8" stroke-width="0.9" fill="none"/>
</g></svg>
<div class="t" style="left:126.5px;top:565px;color:#7a7a7a;font-size:7.3px">Layer Name</div>
<div class="t" style="left:465px;top:565px;color:#7a7a7a;font-size:7.3px">Parent</div>
<div class="t" style="left:101px;top:565px;color:#5a5a5a;font-size:7px">#</div>
<div class="a" style="left:19.5px;top:575.5px;width:544px;height:13px;background:#2c2c2c"></div><div class="a" style="left:34px;top:576px;width:40px;height:12px;background:#262626"></div>
<div class="a" style="left:136.5px;top:576px;width:218px;height:12px;background:#3a3a3a;border:1.2px solid #b0b0b0"></div>
<div class="a" style="left:357px;top:576px;width:122px;height:12px;background:#303030"></div>
<div class="a" style="left:479.5px;top:576px;width:70px;height:12px;background:#262626"></div>
<svg style="left:0;top:0" width="1521" height="836"><g fill="#c8c8c8">
<path d="M23.5 581.5 Q27.8 575.5 32 581.5 Q27.8 587.5 23.5 581.5Z"/><circle cx="27.8" cy="581.5" r="1.6" fill="#2c2c2c"/>
<path d="M75.5 578.5 L81.5 578.5 L78.5 584Z"/>
<rect x="85" y="576.5" width="10" height="10" fill="#b4b4cc"/>
<rect x="123" y="577" width="9" height="4" fill="#3d8ef0"/><rect x="126" y="581" width="6" height="6" fill="#3d8ef0"/><rect x="127.5" y="582.5" width="3" height="3" fill="#e8e8e8"/>
<path d="M360 583 Q363.5 577 367 583Z"/><rect x="359.5" y="583" width="8" height="1.2"/><path d="M361 584 V586.5 M363.5 584 V586.5 M366 584 V586.5" stroke="#c8c8c8" stroke-width="0.9"/>
<path d="M383 586 L390 578" stroke="#c8c8c8" stroke-width="1.1"/>
<rect x="418" y="578" width="8" height="6.5" rx="3" fill="none" stroke="#888" stroke-width="1.2" transform="rotate(-40 422 581.5)"/>
<circle cx="469" cy="581.5" r="4" fill="none" stroke="#888" stroke-width="1"/><circle cx="469" cy="581.5" r="1.8" fill="none" stroke="#888" stroke-width="0.8"/>
<path d="M538.5 580 L541 582.5 L543.5 580" stroke="#bbb" stroke-width="1" fill="none"/>
</g></svg>
<div class="t" style="left:102px;top:577.5px;color:#bbbbbb">3</div>
<div class="t" style="left:138.5px;top:577.5px;color:#d8d8d8">Square 7</div>
<div class="t" style="left:484px;top:577.5px;color:#d8d8d8">None</div>
<div class="a" style="left:139px;top:589.5px;width:216px;height:11px;background:#3a3a3a"></div>
<svg style="left:0;top:0" width="1521" height="836"><g fill="#c8c8c8">
<path d="M29 592 L25 595 L29 598Z"/><path d="M39 592 L42 595 L39 598 L36 595Z" fill="none" stroke="#c8c8c8" stroke-width="0.9"/><path d="M49 592 L53 595 L49 598Z"/>
<circle cx="117" cy="595.5" r="3.8" fill="none" stroke="#3d8ef0" stroke-width="1"/><path d="M117 595.5 L119 593" stroke="#3d8ef0" stroke-width="0.9"/><rect x="116" y="590" width="2" height="1" fill="#3d8ef0"/>
<path d="M127.5 590.5 V599.5 H136 M128 598 Q130 592 132 596 Q133 597 135 593" stroke="#c8c8c8" stroke-width="1" fill="none"/>
</g></svg>
<div class="t" style="left:141px;top:590.5px;color:#c8c8c8">Position</div>
<div class="t" style="left:360px;top:590.5px;color:#3d8ef0">1401.7,716.2</div>
<div class="a" style="left:19.5px;top:804px;width:544px;height:12px;background:#1f1f1f;border-top:1px solid #111"></div>
<svg style="left:0;top:0" width="1521" height="836">
<rect x="24.5" y="807" width="6" height="5" fill="none" stroke="#3d8ef0" stroke-width="1"/><rect x="27.5" y="810" width="6" height="5" fill="none" stroke="#3d8ef0" stroke-width="1"/>
<circle cx="41" cy="809.5" r="3" fill="none" stroke="#c8c8c8" stroke-width="1"/><rect x="41" y="810" width="5" height="5" fill="none" stroke="#c8c8c8" stroke-width="1"/>
<path d="M54 810.5 L56 807 H59 L61 810.5 L59 814 H56Z" fill="none" stroke="#c8c8c8" stroke-width="1"/>
</svg>
<div class="t" style="left:361px;top:806.5px;color:#b8b8b8;font-size:8.5px">Toggle Switches / Modes</div>
<div class="a" style="left:563px;top:533px;width:1px;height:271px;background:#181818"></div>
<div class="a" style="left:564px;top:535px;width:926px;height:38px;background:#1d1d1d"></div>
<div class="a" style="left:566px;top:538px;width:382px;height:6px;background:#686868;border-radius:1px"></div>
<div class="a" style="left:565px;top:537.5px;width:6px;height:7px;background:#3d8ef0;border-radius:3px 0 0 3px"></div>
<div class="a" style="left:945px;top:537.5px;width:6px;height:7px;background:#3d8ef0;border-radius:0 3px 3px 0"></div>
<div class="a" style="left:597.5px;top:538px;width:4px;height:6px;background:#7a8aa8"></div>
<div class="a" style="left:1489px;top:536px;width:2px;height:8px;background:#151515"></div>
<svg style="left:0;top:0" width="1521" height="836"><g fill="#a8a8a8"><rect x="570.0" y="555" width="1" height="9"/><rect x="655.6" y="555" width="1" height="9"/><rect x="741.2" y="555" width="1" height="9"/><rect x="826.8" y="555" width="1" height="9"/><rect x="912.4" y="555" width="1" height="9"/><rect x="998.0" y="555" width="1" height="9"/><rect x="1083.6" y="555" width="1" height="9"/><rect x="1169.2" y="555" width="1" height="9"/><rect x="1254.8" y="555" width="1" height="9"/><rect x="1340.4" y="555" width="1" height="9"/><rect x="1426.0" y="555" width="1" height="9"/></g></svg>
<div class="t" style="left:565px;top:546px;color:#a8a8a8;font-size:8.5px">):00f</div>
<div class="t" style="left:645px;top:546px;color:#a8a8a8;font-size:8.5px">0:12f</div>
<div class="t" style="left:711.7px;top:546px;width:60px;text-align:center;color:#a8a8a8;font-size:8.5px">01:00f</div>
<div class="t" style="left:797.3px;top:546px;width:60px;text-align:center;color:#a8a8a8;font-size:8.5px">01:12f</div>
<div class="t" style="left:882.9px;top:546px;width:60px;text-align:center;color:#a8a8a8;font-size:8.5px">02:00f</div>
<div class="t" style="left:968.5px;top:546px;width:60px;text-align:center;color:#a8a8a8;font-size:8.5px">02:12f</div>
<div class="t" style="left:1054.1px;top:546px;width:60px;text-align:center;color:#a8a8a8;font-size:8.5px">03:00f</div>
<div class="t" style="left:1139.7px;top:546px;width:60px;text-align:center;color:#a8a8a8;font-size:8.5px">03:12f</div>
<div class="t" style="left:1225.3px;top:546px;width:60px;text-align:center;color:#a8a8a8;font-size:8.5px">04:00f</div>
<div class="t" style="left:1310.9px;top:546px;width:60px;text-align:center;color:#a8a8a8;font-size:8.5px">04:12f</div>
<div class="t" style="left:1396.5px;top:546px;width:60px;text-align:center;color:#a8a8a8;font-size:8.5px">05:00f</div>
<div class="a" style="left:567px;top:560.5px;width:347px;height:11.5px;background:#666666"></div>
<div class="a" style="left:565px;top:560px;width:6px;height:12.5px;background:#3d8ef0;border-radius:3px 0 0 3px"></div>
<div class="a" style="left:912px;top:560px;width:5px;height:12.5px;background:#3d8ef0;border-radius:0 3px 3px 0"></div>
<div class="a" style="left:564px;top:573px;width:926px;height:2px;background:#141414"></div>
<div class="a" style="left:641px;top:572.5px;width:7px;height:2px;background:#3cb44a"></div>
<div class="a" style="left:564px;top:575px;width:926px;height:206px;background:#212121"></div>
<div class="a" style="left:570.5px;top:575px;width:342px;height:206px;background:#2a2a2a"></div>
<svg style="left:0;top:0" width="1521" height="836"><g fill="#1b1b1b"><rect x="655.4" y="575" width="1.5" height="206"/><rect x="741.0" y="575" width="1.5" height="206"/><rect x="826.5" y="575" width="1.5" height="206"/><rect x="912.1" y="575" width="1.5" height="206"/><rect x="997.8" y="575" width="1.5" height="206"/><rect x="1083.3" y="575" width="1.5" height="206"/><rect x="1168.9" y="575" width="1.5" height="206"/><rect x="1254.5" y="575" width="1.5" height="206"/><rect x="1340.2" y="575" width="1.5" height="206"/><rect x="1425.8" y="575" width="1.5" height="206"/><rect x="564" y="602.2" width="926" height="1.2"/><rect x="564" y="642.8" width="926" height="1.2"/><rect x="564" y="683.4" width="926" height="1.2"/><rect x="564" y="724.0" width="926" height="1.2"/></g><path d="M1493 561.5 H1502 V569 L1497.5 573 L1493 569Z" fill="#c0c0c0"/><path d="M1492 581 L1497 576 L1500 579 M1494 583 A2.5 2.5 0 1 0 1497 580" stroke="#c0c0c0" stroke-width="1" fill="none"/><rect x="1498" y="578.5" width="4" height="5" fill="#c0c0c0"/></svg>
<div class="t" style="left:571.5px;top:593.5px;color:#a8a8a8;font-size:9.4px">2000 px/sec</div>
<div class="t" style="left:571.5px;top:634.5px;color:#a8a8a8;font-size:9.4px">1500</div>
<div class="t" style="left:571.5px;top:675px;color:#a8a8a8;font-size:9.4px">1000</div>
<div class="t" style="left:571.5px;top:715.5px;color:#a8a8a8;font-size:9.4px">500</div>
<div class="t" style="left:571.5px;top:756px;color:#a8a8a8;font-size:9.4px">0</div>
<svg style="left:0;top:0" width="1521" height="836"><clipPath id="gclip"><rect x="564" y="575" width="926" height="206"/></clipPath><g clip-path="url(#gclip)" stroke="#d8d8d8" stroke-width="1.3" fill="none"><path d="M571 766 C575 705 583 640 588.5 565"/><path d="M618 565 C624 620 632 665 648 698 C662 726 688 752 713 766"/><path d="M713 766 C728 700 755 593 784 593 C813 593 840 700 856 766"/></g><path d="M859 766.5 H1490" stroke="#a8a8a8" stroke-width="1" stroke-dasharray="2.5 2"/><path d="M566 766.5 H594 M643 766.5 H737 M832 766.5 H856" stroke="#9a9868" stroke-width="1.4"/><g fill="#e8e030"><circle cx="594.2" cy="766.5" r="2.1"/><circle cx="643" cy="766.5" r="2.1"/><circle cx="736.6" cy="766.5" r="2.1"/><circle cx="832" cy="766.5" r="2.1"/><rect x="710.5" y="764.5" width="5.5" height="5"/></g><rect x="568.5" y="763.5" width="5.5" height="5.5" fill="none" stroke="#d8d040" stroke-width="1"/><rect x="853.5" y="763.5" width="5.5" height="5.5" fill="none" stroke="#d8d040" stroke-width="1"/><rect x="641.2" y="556" width="1" height="225" fill="#3a6cc0"/><path d="M637 549.5 H646 V555 L641.7 559.5 L637 555Z" fill="#3d8ef0"/></svg>
<div class="a" style="left:651px;top:742.5px;width:78.5px;height:20.5px;background:#fffec8;border:1px solid #c8b850;border-radius:2px"></div>
<div class="t" style="left:654.5px;top:744px;color:#111;font-size:8.5px;line-height:9.5px">Speed: 0.00 px/sec
Influence: 97.39%</div>

<div class="a" style="left:564px;top:781px;width:926px;height:23px;background:#1f1f1f"></div>
<svg style="left:0;top:0" width="1521" height="836"><g fill="#c0c0c0" stroke="none">
<path d="M846 795 Q852 789 858 795 Q852 801 846 795Z"/><circle cx="852" cy="795" r="2" fill="#1f1f1f"/><circle cx="852" cy="795" r="1"/><path d="M856 799 L859 799 L857.5 801Z"/>
<rect x="865.5" y="789.5" width="11" height="10" fill="none" stroke="#c0c0c0" stroke-width="1"/><path d="M868 792.5 H874 M868 794.5 H874 M868 796.5 H874" stroke="#c0c0c0" stroke-width="0.8"/><path d="M876 800 L879 800 L877.5 802Z"/>
<rect x="886.5" y="790.5" width="9" height="9" fill="none" stroke="#c0c0c0" stroke-width="1" stroke-dasharray="1.5 1"/><rect x="885" y="789" width="2.5" height="2.5"/><rect x="894.5" y="789" width="2.5" height="2.5"/><rect x="885" y="798.5" width="2.5" height="2.5"/><rect x="894.5" y="798.5" width="2.5" height="2.5"/>
<path d="M906 800 V794 A4.5 4.5 0 0 1 915 794 V800" stroke="#c0c0c0" stroke-width="2.5" fill="none"/>
</g>
<g stroke="#3d8ef0" fill="none" stroke-width="1.2"><path d="M942 789 V801 M940.5 789 H943.5 M940.5 801 H943.5"/><circle cx="948.5" cy="794" r="3.8"/><path d="M951 797 L954.5 800.5" stroke-width="1.6"/></g>
<g stroke="#c0c0c0" fill="none" stroke-width="1"><rect x="961.5" y="789.5" width="13" height="10"/><path d="M963 792 Q967 792 968 795 Q969 798 973 798"/>
<rect x="981.5" y="789.5" width="13" height="10"/><path d="M983 793 Q987 791 993 794 M983 796 Q987 794 993 797"/>
<path d="M1020 791 H1033 M1020 795 H1033 M1020 799 H1033" stroke-dasharray="2 1"/><path d="M1022 790 L1030 800"/></g>
<g fill="#c0c0c0"><path d="M1065.5 790 L1070.5 795 L1065.5 800 L1060.5 795Z"/><path d="M1069 800 L1072 800 L1070.5 802Z"/>
<rect x="1077" y="796.5" width="4" height="4"/><rect x="1084" y="789" width="4" height="4"/><path d="M1079 797 V793.5 H1086 M1086 791 H1091" stroke="#c0c0c0" stroke-width="1" fill="none"/>
<rect x="1099" y="796.5" width="4" height="4"/><rect x="1106" y="789.5" width="4" height="4"/><path d="M1101 798 L1108 791.5 L1111 790" stroke="#c0c0c0" stroke-width="1" fill="none"/>
<rect x="1116" y="789.5" width="4" height="4"/><path d="M1118 800 V791.5 Q1122 790 1129 790" stroke="#c0c0c0" stroke-width="1" fill="none"/>
<rect x="1156" y="789.5" width="4" height="4"/><path d="M1153 800 Q1156 791 1158 791.5 Q1160 791 1163 800 M1153 791.5 H1163" stroke="#c0c0c0" stroke-width="1" fill="none"/>
<rect x="1181" y="789.5" width="4" height="4"/><path d="M1175 800 Q1178 791.5 1183 791.5 H1186" stroke="#c0c0c0" stroke-width="1" fill="none"/>
<rect x="1195" y="789.5" width="4" height="4"/><path d="M1194 791.5 H1198 Q1203 792 1207 800" stroke="#c0c0c0" stroke-width="1" fill="none"/>
</g></svg>
<div class="a" style="left:564px;top:804px;width:938.5px;height:12px;background:#1d1d1d;border-top:1px solid #111"></div>
<div class="a" style="left:645px;top:805px;width:348px;height:10px;background:#262626;border-radius:5px"></div>
<svg style="left:0;top:0" width="1521" height="836"><g fill="#c8c8c8"><path d="M569 813 L572.5 809.5 L576 813Z"/><path d="M632 813.5 L636.5 808 L639 810.5 L640.5 809 L644 813.5Z"/></g>
<path d="M588 811 H622" stroke="#3a3a3a" stroke-width="1.5"/><circle cx="609.5" cy="811" r="3.2" fill="#1d1d1d" stroke="#aaa" stroke-width="1.2"/></svg>
<!--/TIMELINE-->
<svg style="left:0;top:0" width="1521" height="836"><path d="M648.5 771 V783 L651.3 780.5 L653.5 785.5 L655.3 784.7 L653.2 779.8 L657 779.5Z" fill="#111" stroke="#eee" stroke-width="0.9"/></svg>
<!-- CORNER MASK -->
<svg style="left:0;top:0" width="1521" height="836"><path fill-rule="evenodd" fill="#ffffff" d="M0 0 H1521 V836 H0Z M25 18 H1497 A7 7 0 0 1 1504 25 V810 A7 7 0 0 1 1497 817 H25 A7 7 0 0 1 18 810 V25 A7 7 0 0 1 25 18Z"/></svg>
</body></html>
